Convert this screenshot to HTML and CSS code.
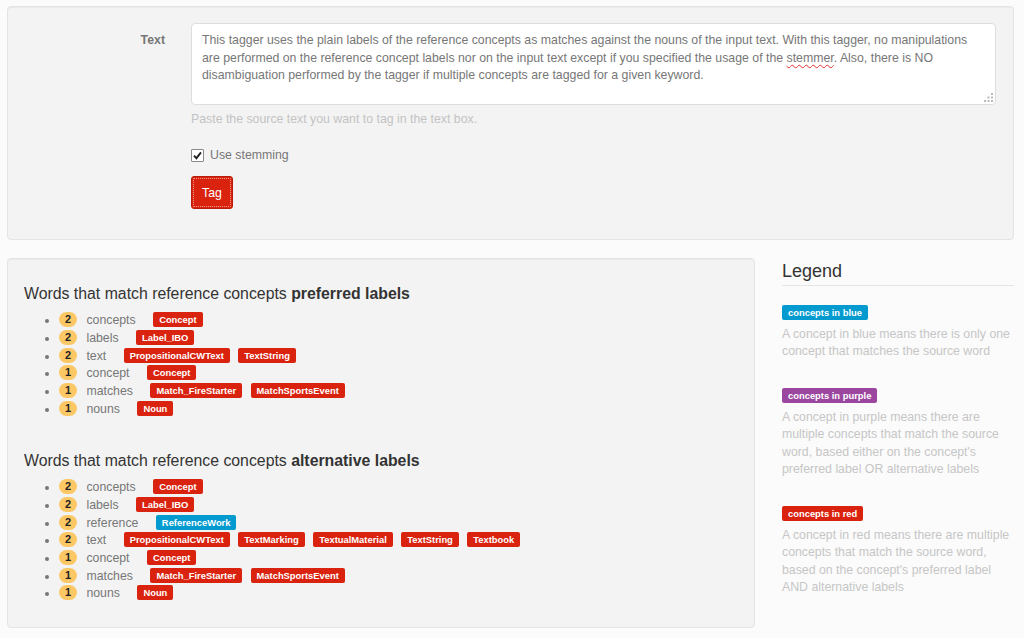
FILE: index.html
```html
<!DOCTYPE html>
<html lang="en">
<head>
    <meta charset="utf-8">
    <title>Tagger</title>
    <link rel="stylesheet" href="styles.css">
</head>
<body>
<div class="page">
    <div class="well form-well">
        <div class="form-row">
            <label class="control-label">Text</label>
            <div class="controls">
                <div class="form-control textarea">This tagger uses the plain labels of the reference concepts as matches against the nouns of the input text. With this tagger, no manipulations are performed on the reference concept labels nor on the input text except if you specified the usage of the <span class="misspelled">stemmer</span>. Also, there is NO disambiguation performed by the tagger if multiple concepts are tagged for a given keyword.<svg class="grip" width="9" height="9" viewBox="0 0 9 9"><g fill="#b9b9b9"><rect x="7" y="0" width="2" height="2"/><rect x="3.5" y="3.5" width="2" height="2"/><rect x="7" y="3.5" width="2" height="2"/><rect x="0" y="7" width="2" height="2"/><rect x="3.5" y="7" width="2" height="2"/><rect x="7" y="7" width="2" height="2"/></g></svg></div>
                <p class="help-block">Paste the source text you want to tag in the text box.</p>
                <div class="checkbox">
                    <span class="check-box"><svg width="9" height="9" viewBox="0 0 9 9"><path d="M1 4.6 L3.4 7.2 L8 1.4" fill="none" stroke="#222" stroke-width="1.9"/></svg></span>
                    <span>Use stemming</span>
                </div>
                <button class="btn btn-primary" type="button">Tag</button>
            </div>
        </div>
    </div>

    <div class="results-row">
        <div class="well results-well">
            <div class="result-block">
                <h4>Words that match reference concepts <strong>preferred labels</strong></h4>
                <ul>
                    <li><span class="badge">2</span> <span class="word">concepts</span> <span class="label label-red">Concept</span></li>
                    <li><span class="badge">2</span> <span class="word">labels</span> <span class="label label-red">Label_IBO</span></li>
                    <li><span class="badge">2</span> <span class="word">text</span> <span class="label label-red">PropositionalCWText</span> <span class="label label-red">TextString</span></li>
                    <li><span class="badge">1</span> <span class="word">concept</span> <span class="label label-red">Concept</span></li>
                    <li><span class="badge">1</span> <span class="word">matches</span> <span class="label label-red">Match_FireStarter</span> <span class="label label-red">MatchSportsEvent</span></li>
                    <li><span class="badge">1</span> <span class="word">nouns</span> <span class="label label-red">Noun</span></li>
                </ul>
            </div>
            <div class="result-block">
                <h4>Words that match reference concepts <strong>alternative labels</strong></h4>
                <ul>
                    <li><span class="badge">2</span> <span class="word">concepts</span> <span class="label label-red">Concept</span></li>
                    <li><span class="badge">2</span> <span class="word">labels</span> <span class="label label-red">Label_IBO</span></li>
                    <li><span class="badge">2</span> <span class="word">reference</span> <span class="label label-blue">ReferenceWork</span></li>
                    <li><span class="badge">2</span> <span class="word">text</span> <span class="label label-red">PropositionalCWText</span> <span class="label label-red">TextMarking</span> <span class="label label-red">TextualMaterial</span> <span class="label label-red">TextString</span> <span class="label label-red">Textbook</span></li>
                    <li><span class="badge">1</span> <span class="word">concept</span> <span class="label label-red">Concept</span></li>
                    <li><span class="badge">1</span> <span class="word">matches</span> <span class="label label-red">Match_FireStarter</span> <span class="label label-red">MatchSportsEvent</span></li>
                    <li><span class="badge">1</span> <span class="word">nouns</span> <span class="label label-red">Noun</span></li>
                </ul>
            </div>
        </div>

        <div class="legend">
            <h4 class="legend-title">Legend</h4>
            <div class="legend-item">
                <span class="label label-blue">concepts in blue</span>
                <p>A concept in blue means there is only one concept that matches the source word</p>
            </div>
            <div class="legend-item">
                <span class="label label-purple">concepts in purple</span>
                <p>A concept in purple means there are multiple concepts that match the source word, based either on the concept's preferred label OR alternative labels</p>
            </div>
            <div class="legend-item">
                <span class="label label-red">concepts in red</span>
                <p>A concept in red means there are multiple concepts that match the source word, based on the concept's preferred label AND alternative labels</p>
            </div>
        </div>
    </div>
</div>
</body>
</html>
```

FILE: styles.css
```css
body {
    margin: 0;
    background-color: #fbfbfb;
    font-family: "Liberation Sans", Arial, sans-serif;
    font-size: 12.32px;
    line-height: 17.6px;
    color: #777777;
}
.page {
    padding: 6px 10px 0 7px;
}
.well {
    background-color: #f3f3f3;
    border: 1px solid #e4e4e4;
    border-radius: 4px;
    box-shadow: inset 0 1px 1px rgba(0, 0, 0, 0.04);
}
.form-well {
    padding: 16px 17px 30px 0;
}
.form-row {
    display: grid;
    grid-template-columns: 1fr 805px;
}
.control-label {
    font-weight: bold;
    text-align: right;
    padding: 9px 26px 0 0;
}
.form-control {
    background: white;
    border: 1px solid #dedede;
    border-radius: 4px;
}
.textarea {
    position: relative;
    height: 70px;
    padding: 8px 10px 2px;
    color: #777777;
}
.misspelled {
    text-decoration: underline wavy #e53030;
    text-decoration-thickness: 1px;
    text-underline-offset: 2px;
}
.grip {
    position: absolute;
    right: 2px;
    bottom: 2px;
}
.help-block {
    margin: 6px 0 0;
    color: #c3c3c3;
}
.checkbox {
    display: flex;
    align-items: center;
    gap: 6px;
    margin-top: 18px;
}
.check-box {
    display: inline-flex;
    align-items: center;
    justify-content: center;
    width: 11px;
    height: 11px;
    border: 1px solid #8a8a8a;
    border-radius: 1px;
    background: white;
}
.btn {
    display: block;
    margin-top: 12px;
    height: 33px;
    padding: 0 10px;
    font-family: inherit;
    font-size: 12.32px;
    border-radius: 3px;
    cursor: pointer;
}
.btn-primary {
    color: white;
    background-color: #d9230f;
    border: 1px solid #b81d0c;
    outline: 1px dotted rgba(255, 255, 255, 0.55);
    outline-offset: -3px;
}
.results-row {
    display: grid;
    grid-template-columns: 748px 232px;
    column-gap: 27px;
    margin-top: 18px;
}
.results-well {
    padding: 17px 17px 16px 16px;
    height: 335px;
}
h4 {
    margin: 8px 0 8px;
    font-size: 15.84px;
    line-height: 20px;
    font-weight: normal;
    color: #333333;
}
h4 strong {
    color: #333333;
}
.result-block + .result-block h4 {
    margin-top: 33px;
}
ul {
    margin: 0 0 9px;
    padding-left: 35px;
}
li {
    height: 17.7px;
}
.badge {
    display: inline-block;
    min-width: 8px;
    padding: 0 5px;
    height: 15px;
    line-height: 15px;
    border-radius: 8px;
    background-color: #fcc865;
    color: #222222;
    font-size: 11px;
    font-weight: bold;
    text-align: center;
    vertical-align: 1px;
    margin-right: 6px;
}
.word {
    margin-right: 14px;
}
.label {
    display: inline-block;
    padding: 0 6px;
    height: 15px;
    line-height: 15px;
    font-size: 9.4px;
    font-weight: bold;
    color: white;
    border-radius: 2px;
    vertical-align: 1px;
    margin-right: 5px;
}
.label-red {
    background-color: #d9230f;
}
.label-blue {
    background-color: #029acf;
}
.label-purple {
    background-color: #9b479f;
}
.legend-title {
    margin: 3px 0 0;
    padding-bottom: 4px;
    font-size: 18px;
    border-bottom: 1px solid #e5e5e5;
}
.legend-item {
    margin-top: 19px;
}
.legend-item + .legend-item {
    margin-top: 27px;
}
.legend-item p {
    margin: 3px 0 0;
    color: #c6c6c6;
    line-height: 17.6px;
}
```
